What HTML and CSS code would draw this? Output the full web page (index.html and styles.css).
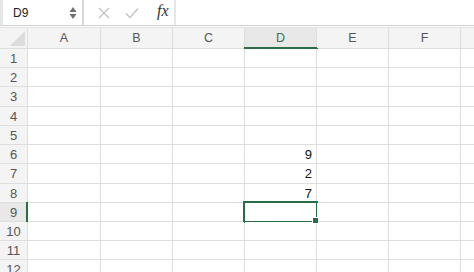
FILE: index.html
```html
<!DOCTYPE html>
<html>
<head>
  <link rel="stylesheet" href="styles.css">
</head>
<body>
  <div class="formula-bar">
    <div class="name-box">
      <span class="cell-ref">D9</span>
      <span class="spinner">
        <svg width="8" height="14" viewBox="0 0 8 14">
          <path d="M4 1 L7.5 6 L0.5 6 Z" fill="#707070"/>
          <path d="M4 13 L7.5 8 L0.5 8 Z" fill="#707070"/>
        </svg>
      </span>
    </div>
    <div class="fb-buttons">
      <svg class="fb-icon" width="12" height="12" viewBox="0 0 12 12">
        <path d="M1 1 L11 11 M11 1 L1 11" stroke="#c4c4c4" stroke-width="1.4" fill="none"/>
      </svg>
      <svg class="fb-icon" width="14" height="12" viewBox="0 0 14 12">
        <path d="M1 6.5 L5 10.5 L13 1.5" stroke="#c4c4c4" stroke-width="1.4" fill="none"/>
      </svg>
      <span class="fx">fx</span>
    </div>
    <div class="formula-input"></div>
  </div>

  <div class="sheet" id="sheet"></div>

  <script>
    // build the grid: header row + 12 rows, row header + 7 columns
    const sheet = document.getElementById('sheet');
    const cols = ['A', 'B', 'C', 'D', 'E', 'F', 'G'];
    const values = { 6: '9', 7: '2', 8: '7' };

    const corner = document.createElement('div');
    corner.className = 'corner';
    sheet.appendChild(corner);

    cols.forEach(c => {
      const h = document.createElement('div');
      h.className = 'col-head' + (c === 'D' ? ' active' : '');
      h.textContent = c === 'G' ? '' : c;
      sheet.appendChild(h);
    });

    for (let r = 1; r <= 12; r++) {
      const rh = document.createElement('div');
      rh.className = 'row-head' + (r === 9 ? ' active' : '');
      rh.textContent = r;
      sheet.appendChild(rh);

      cols.forEach(c => {
        const cell = document.createElement('div');
        cell.className = 'cell';
        if (c === 'D' && values[r]) cell.textContent = values[r];
        if (c === 'D' && r === 9) cell.classList.add('selected');
        sheet.appendChild(cell);
      });
    }
  </script>
</body>
</html>
```

FILE: styles.css
```css
body {
  margin: 0;
  padding: 0;
  background-color: #fff;
  font-family: 'Liberation Sans', Arial, sans-serif;
  overflow: hidden;
}

.formula-bar {
  display: flex;
  height: 25px;
  border-left: 3px solid #e6e6e6;
  border-bottom: 1px solid #cfcfcf;
  background-color: #fff;
}

.name-box {
  width: 81px;
  display: flex;
  align-items: center;
  justify-content: space-between;
  padding: 0 5px 0 10px;
  box-sizing: border-box;
  border-right: 2px solid #d8d8d8;
}

.cell-ref {
  font-size: 12px;
  color: #222;
}

.spinner {
  display: flex;
  align-items: center;
}

.fb-buttons {
  width: 92px;
  display: flex;
  align-items: center;
  gap: 15px;
  padding-left: 14px;
  box-sizing: border-box;
  border-right: 2px solid #e6e6e6;
}

.fx {
  font-family: 'Liberation Serif', 'Times New Roman', serif;
  font-style: italic;
  font-size: 16px;
  color: #333;
  margin-left: 3px;
  margin-top: -3px;
}

.formula-input {
  flex: 1;
}

.sheet {
  margin-top: 1px;
  display: grid;
  grid-template-columns: 27px 72px repeat(5, 71px) 1fr;
  grid-template-rows: 20px 18px 18px 19px 18px 18px 18px 19px 18px 18px 18px 18px 18px;
  gap: 1px;
  background-color: #dedede;
  border-top: 1px solid #e2e2e2;
}

.corner {
  background-color: #f4f4f4;
  position: relative;
}

.corner:after {
  content: "";
  position: absolute;
  right: 2px;
  bottom: 2px;
  width: 0;
  height: 0;
  border-left: 15px solid transparent;
  border-bottom: 15px solid #dcdcdc;
}

.col-head {
  background-color: #f4f4f4;
  color: #555;
  font-size: 12.5px;
  display: flex;
  align-items: center;
  justify-content: center;
  position: relative;
}

.col-head.active {
  background-color: #e8e8e8;
  color: #3d6e4f;
}

.col-head.active:after {
  content: "";
  position: absolute;
  left: -1px;
  right: -2px;
  bottom: -1px;
  height: 2px;
  background-color: #2b6e45;
}

.row-head {
  background-color: #f4f4f4;
  color: #555;
  font-size: 13px;
  display: flex;
  align-items: center;
  justify-content: center;
  position: relative;
}

.row-head.active {
  background-color: #e8e8e8;
}

.row-head.active:after {
  content: "";
  position: absolute;
  right: -1px;
  top: -1px;
  bottom: -1px;
  width: 2px;
  background-color: #2b6e45;
}

.cell {
  background-color: #fff;
  font-size: 13px;
  color: #111;
  display: flex;
  align-items: center;
  justify-content: flex-end;
  padding-right: 4px;
  position: relative;
}

.cell.selected:after {
  content: "";
  position: absolute;
  top: -2px;
  left: -2px;
  right: -2px;
  bottom: -2px;
  border: 2px solid #256e43;
}

.cell.selected:before {
  content: "";
  position: absolute;
  right: -3px;
  bottom: -3px;
  width: 5px;
  height: 5px;
  background-color: #256e43;
  border: 1px solid #fff;
  z-index: 1;
}
```
